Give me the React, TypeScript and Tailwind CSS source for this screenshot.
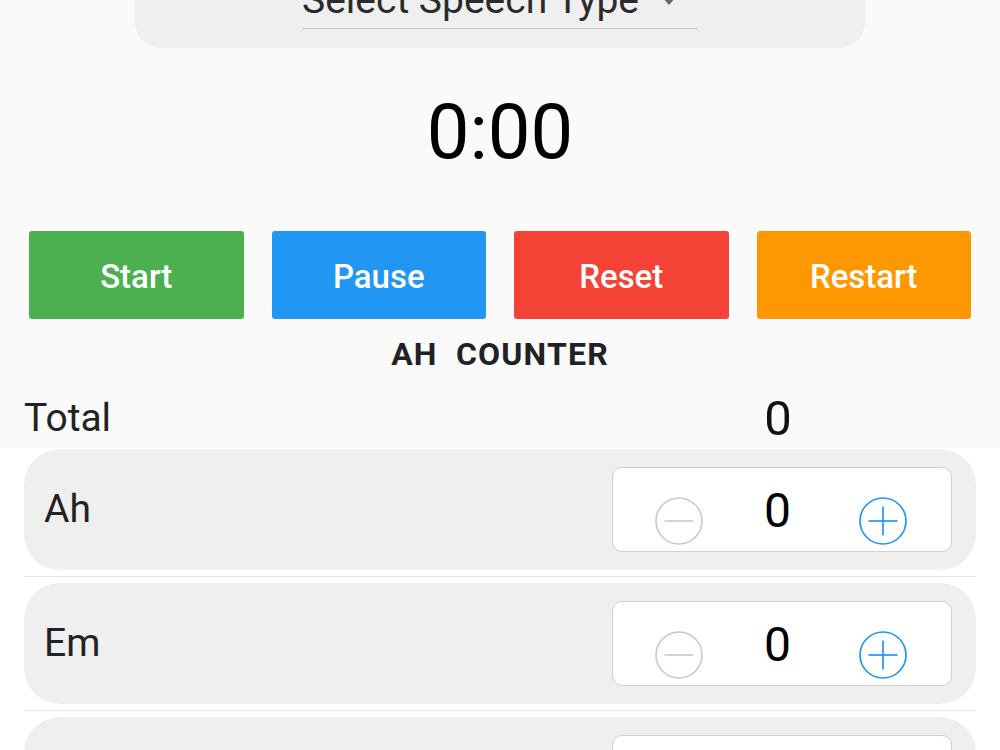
import React from "react";

function MinusIcon() {
  return (
    <svg width="48" height="48" viewBox="0 0 48 48" className="block">
      <circle cx="24" cy="24" r="23" fill="none" stroke="#c9c9c9" strokeWidth="1.6" />
      <line x1="9.5" y1="24" x2="38.5" y2="24" stroke="#c9c9c9" strokeWidth="1.6" />
    </svg>
  );
}

function PlusIcon() {
  return (
    <svg width="48" height="48" viewBox="0 0 48 48" className="block">
      <circle cx="24" cy="24" r="23" fill="none" stroke="#2196f3" strokeWidth="1.7" />
      <line x1="9.5" y1="24" x2="38.5" y2="24" stroke="#2196f3" strokeWidth="1.7" />
      <line x1="24" y1="9.5" x2="24" y2="38.5" stroke="#2196f3" strokeWidth="1.7" />
    </svg>
  );
}

function CounterRow({ label, partial }: { label: string; partial?: boolean }) {
  return (
    <div>
      <div className="mx-[24px] h-[121px] rounded-[36px] bg-[#efefef] flex items-center justify-between pl-[20px] pr-[24px]">
        <span className="text-[39px] leading-none text-[#222]">{partial ? "" : label}</span>
        <div className="w-[340px] h-[85px] bg-white border border-[#d0d0d0] rounded-[10px] flex items-start pl-[42px]">
          {!partial && (
            <>
              <div className="mt-[29px]">
                <MinusIcon />
              </div>
              <div className="ml-[61px] w-[24px] mt-[19px] text-center text-[48px] leading-none text-black">
                0
              </div>
              <div className="ml-[71px] mt-[29px]">
                <PlusIcon />
              </div>
            </>
          )}
        </div>
      </div>
      <div className="mx-[24px] h-px bg-[#e6e6e6] my-[6px]" />
    </div>
  );
}

export default function App() {
  const buttons = [
    { label: "Start", cls: "bg-[#4caf50]" },
    { label: "Pause", cls: "bg-[#2196f3]" },
    { label: "Reset", cls: "bg-[#f44336]" },
    { label: "Restart", cls: "bg-[#ff9800]" },
  ];
  return (
    <div
      className="h-screen overflow-hidden bg-white"
      style={{ fontFamily: "Roboto, 'Noto Sans', sans-serif" }}
    >
      <div className="bg-[#fafafa] h-[448px]">
        <div className="flex justify-center">
          <div className="w-[730px] h-[48px] bg-[#efefef] rounded-b-[26px] flex justify-center">
            <div className="relative w-[396px] h-[29px] border-b border-[#c4c4c4] flex items-start">
              <span className="-mt-[18px] text-[39px] leading-[36px] text-[#2b2b2b] whitespace-nowrap">
                Select Speech Type
              </span>
              <svg
                width="12"
                height="8"
                viewBox="0 0 12 8"
                className="absolute right-[23px] top-[-2px]"
              >
                <polygon points="0,0 12,0 6,7" fill="#666" />
              </svg>
            </div>
          </div>
        </div>

        <div className="mt-[46px] text-center text-[76px] leading-none text-black">0:00</div>

        <div className="mt-[61px] grid grid-cols-4 gap-[28px] px-[29px]">
          {buttons.map((b) => (
            <div
              key={b.label}
              className={`${b.cls} h-[88px] rounded-[3px] flex items-center justify-center pt-[3px] text-white text-[33px] font-medium`}
            >
              {b.label}
            </div>
          ))}
        </div>

        <div className="mt-[19px] text-center text-[32px] tracking-[1.2px] leading-none font-bold text-[#222] whitespace-pre">
          AH  COUNTER
        </div>

        <div className="h-[77px] pt-[19px] flex items-center pl-[24px]">
          <span className="text-[39px] leading-none text-[#222]">Total</span>
          <div className="ml-auto mr-[52px] w-[340px] text-center text-[49px] leading-none text-[#111]">
            0
          </div>
        </div>
      </div>

      <div className="pt-[1px]">
        <CounterRow label="Ah" />
        <CounterRow label="Em" />
        <CounterRow label="Um" partial />
      </div>
    </div>
  );
}
